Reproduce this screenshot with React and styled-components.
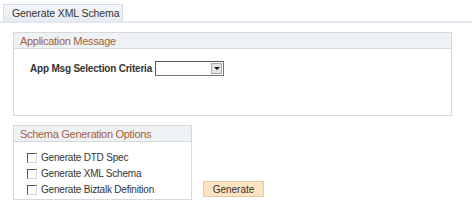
import React from 'react';
import styled, { createGlobalStyle } from 'styled-components';

const GlobalStyle = createGlobalStyle`
  body {
    margin: 0;
    background: #ffffff;
    font-family: "Liberation Sans", Arial, sans-serif;
    color: #333333;
  }
`;

const Page = styled.div`
  width: 474px;
  height: 204px;
  overflow: hidden;
`;

const TabBar = styled.div`
  display: flex;
  padding: 4px 0 0 3px;
  width: 469px;
  border-bottom: 2px solid #e3e6ee;
`;

const Tab = styled.div`
  width: 120px;
  height: 17px;
  box-sizing: border-box;
  padding-left: 8px;
  white-space: nowrap;
  font-size: 10.5px;
  letter-spacing: -0.1px;
  line-height: 17px;
  color: #333;
  background: linear-gradient(#f3f6fa, #e6ecf3);
  border: 1px solid #d6dde6;
  border-bottom: none;
`;

const Group = styled.div`
  width: ${p => p.$w}px;
  height: ${p => p.$h}px;
  box-sizing: border-box;
  border: 1px solid #d9d9d9;
  display: flex;
  flex-direction: column;
`;

const GroupHeader = styled.div`
  height: 16px;
  box-sizing: border-box;
  background: #eef2f5;
  border-bottom: 1px solid #d9d9d9;
  padding-left: 6px;
  white-space: nowrap;
  font-size: 11px;
  letter-spacing: -0.3px;
  line-height: 16px;
  color: #a4603f;
`;

const AppMsg = styled.div`
  margin: 9px 0 0 13px;
`;

const CriteriaRow = styled.div`
  display: flex;
  align-items: center;
  padding: 12px 0 0 16px;
`;

const Label = styled.span`
  font-size: 10px;
  letter-spacing: -0.2px;
  font-weight: bold;
  color: #333;
  margin-right: 3px;
`;

const SelectBox = styled.div`
  width: 69px;
  height: 15px;
  box-sizing: border-box;
  border: 1px solid #777;
  border-top-color: #555;
  border-left-color: #555;
  background: #fff;
  display: flex;
  justify-content: flex-end;
  padding: 1px;
`;

const SelectArrow = styled.div`
  width: 11px;
  height: 100%;
  box-sizing: border-box;
  background: #e4e4e4;
  border: 1px solid #aaa;
  display: flex;
  align-items: center;
  justify-content: center;
  &::after {
    content: '';
    border-left: 3px solid transparent;
    border-right: 3px solid transparent;
    border-top: 3px solid #111;
  }
`;

const BottomRow = styled.div`
  display: flex;
  align-items: flex-end;
  margin: 9px 0 0 13px;
`;

const OptionList = styled.div`
  display: flex;
  flex-direction: column;
  gap: 3px;
  padding: 9px 0 0 13px;
`;

const OptionRow = styled.label`
  display: flex;
  align-items: center;
  height: 13px;
  white-space: nowrap;
  font-size: 10px;
  letter-spacing: -0.2px;
  color: #333;
`;

const Check = styled.span`
  width: 10px;
  height: 10px;
  box-sizing: border-box;
  border: 1px solid #d4d4d4;
  border-top-color: #555;
  border-left-color: #555;
  background: #fff;
  margin-right: 4px;
`;

const Button = styled.button`
  margin: 0 0 3px 11px;
  width: 61px;
  height: 16px;
  padding: 0;
  box-sizing: border-box;
  background: #fde4c1;
  border: 1px solid #e8cba3;
  font-family: "Liberation Sans", Arial, sans-serif;
  font-size: 10px;
  color: #333;
`;

const options = ['Generate DTD Spec', 'Generate XML Schema', 'Generate Biztalk Definition'];

export default function App() {
  return (
    <Page>
      <GlobalStyle />
      <TabBar>
        <Tab>Generate XML Schema</Tab>
      </TabBar>
      <AppMsg>
        <Group $w={439} $h={84}>
          <GroupHeader>Application Message</GroupHeader>
          <CriteriaRow>
            <Label>App Msg Selection Criteria</Label>
            <SelectBox>
              <SelectArrow />
            </SelectBox>
          </CriteriaRow>
        </Group>
      </AppMsg>
      <BottomRow>
        <Group $w={179} $h={75}>
          <GroupHeader>Schema Generation Options</GroupHeader>
          <OptionList>
            {options.map(o => (
              <OptionRow key={o}>
                <Check />
                {o}
              </OptionRow>
            ))}
          </OptionList>
        </Group>
        <Button>Generate</Button>
      </BottomRow>
    </Page>
  );
}
